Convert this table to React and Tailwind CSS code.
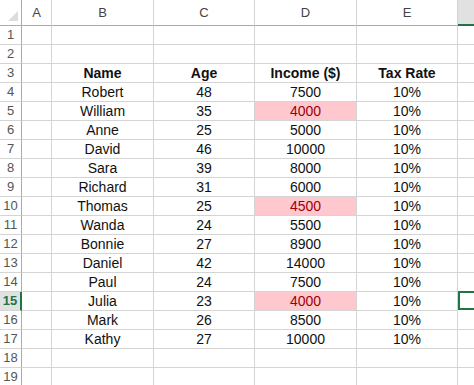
import React from "react";

const cols = ["A", "B", "C", "D", "E", "F"];

const rows = [
  null,
  null,
  { name: "Name", age: "Age", income: "Income ($)", tax: "Tax Rate", head: true },
  { name: "Robert", age: 48, income: 7500, tax: "10%" },
  { name: "William", age: 35, income: 4000, tax: "10%", low: true },
  { name: "Anne", age: 25, income: 5000, tax: "10%" },
  { name: "David", age: 46, income: 10000, tax: "10%" },
  { name: "Sara", age: 39, income: 8000, tax: "10%" },
  { name: "Richard", age: 31, income: 6000, tax: "10%" },
  { name: "Thomas", age: 25, income: 4500, tax: "10%", low: true },
  { name: "Wanda", age: 24, income: 5500, tax: "10%" },
  { name: "Bonnie", age: 27, income: 8900, tax: "10%" },
  { name: "Daniel", age: 42, income: 14000, tax: "10%" },
  { name: "Paul", age: 24, income: 7500, tax: "10%" },
  { name: "Julia", age: 23, income: 4000, tax: "10%", low: true },
  { name: "Mark", age: 26, income: 8500, tax: "10%" },
  { name: "Kathy", age: 27, income: 10000, tax: "10%" },
  null,
  null,
];

const cell = "h-[19px] border-r border-b border-[#d4d4d4] flex items-center justify-center leading-[19px]";

function App() {
  return (
    <div
      className="w-[474px] h-[385px] overflow-hidden bg-white text-[14px] text-[#111]"
      style={{ fontFamily: '"Liberation Sans", Arial, sans-serif' }}
    >
      <div className="grid grid-cols-[22px_30px_102px_101px_102px_101px_60px]">
        {/* header row */}
        <div className="h-[26px] border-r border-b border-[#ababab] bg-white flex items-end justify-end pr-[3px] pb-[4px]">
          <svg width="10" height="10" viewBox="0 0 10 10">
            <polygon points="10,0 10,10 0,10" fill="#dcdcdc" />
          </svg>
        </div>
        {cols.map((c) =>
          c === "F" ? (
            <div key={c} className="h-[26px] bg-[#e1e1e1] border-b-2 border-[#217346] flex items-center justify-center text-[13px] text-[#217346]"></div>
          ) : (
            <div key={c} className="h-[26px] border-r border-b border-[#ababab] border-r-[#d4d4d4] bg-white flex items-center justify-center text-[13px] text-[#444]">
              {c}
            </div>
          )
        )}

        {rows.map((r, i) => {
          const n = i + 1;
          const sel = n === 15;
          return (
            <React.Fragment key={n}>
              <div
                className={
                  sel
                    ? "h-[19px] bg-[#e1e1e1] border-r-2 border-r-[#217346] border-b border-b-[#d4d4d4] flex items-center justify-center text-[13px] font-bold text-[#217346]"
                    : "h-[19px] border-r border-r-[#ababab] border-b border-b-[#d4d4d4] flex items-center justify-center text-[13px] text-[#555]"
                }
              >
                {n}
              </div>
              <div className={cell}></div>
              <div className={`${cell} ${r && r.head ? "font-bold" : ""}`}>{r ? r.name : ""}</div>
              <div className={`${cell} ${r && r.head ? "font-bold" : ""}`}>{r ? r.age : ""}</div>
              <div
                className={`${cell} ${r && r.head ? "font-bold" : ""} ${r && r.low ? "bg-[#ffc7ce] text-[#9c0006]" : ""}`}
              >
                {r ? r.income : ""}
              </div>
              <div className={`${cell} ${r && r.head ? "font-bold" : ""}`}>{r ? r.tax : ""}</div>
              {sel ? (
                <div className="h-[19px] border-2 border-[#217346] -mt-px"></div>
              ) : (
                <div className={cell}></div>
              )}
            </React.Fragment>
          );
        })}
      </div>
    </div>
  );
}

export default App;
